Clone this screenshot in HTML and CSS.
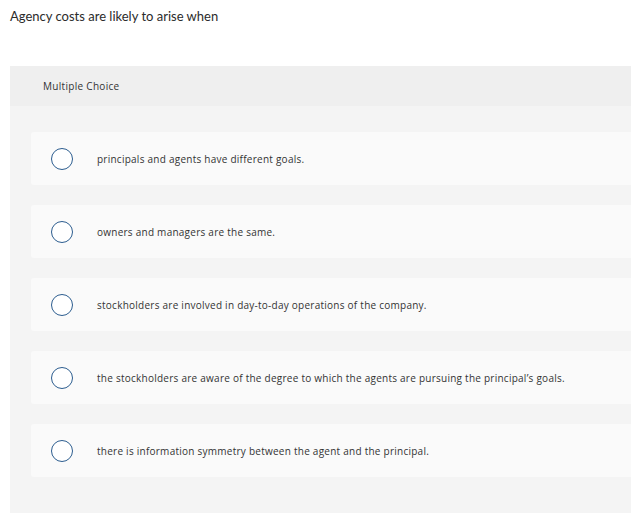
FILE: index.html
```html
<!DOCTYPE html>
<html>
<head>
<meta charset="utf-8">
<link rel="stylesheet" href="styles.css">
</head>
<body>
<div class="question">Agency costs are likely to arise when</div>
<div class="panel">
  <div class="panel-header">Multiple Choice</div>
  <div class="panel-body">
    <div class="option"><span class="radio"></span><span class="label">principals and agents have different goals.</span></div>
    <div class="option"><span class="radio"></span><span class="label">owners and managers are the same.</span></div>
    <div class="option"><span class="radio"></span><span class="label">stockholders are involved in day-to-day operations of the company.</span></div>
    <div class="option"><span class="radio"></span><span class="label">the stockholders are aware of the degree to which the agents are pursuing the principal’s goals.</span></div>
    <div class="option"><span class="radio"></span><span class="label">there is information symmetry between the agent and the principal.</span></div>
  </div>
</div>
</body>
</html>
```
FILE: styles.css
```css
html, body {
  margin: 0;
  padding: 0;
  background: #ffffff;
}
body {
  font-family: Lato, "Open Sans", sans-serif;
  color: #333333;
  width: 631px;
  height: 513px;
  overflow: hidden;
}
.question {
  font-size: 13px;
  line-height: 16px;
  padding: 8px 0 0 10px;
  height: 66px;
  box-sizing: border-box;
  color: #2b2b2b;
}
.panel {
  margin-left: 10px;
  background: #f4f4f4;
  height: 447px;
}
.panel-header {
  background: #efefef;
  height: 40px;
  padding-left: 33px;
  display: flex;
  align-items: center;
  font-family: "Open Sans", Lato, sans-serif;
  font-size: 10px;
  letter-spacing: 0.3px;
  color: #333333;
}
.panel-body {
  padding: 26px 0 0 21px;
  display: flex;
  flex-direction: column;
  gap: 20px;
}
.option {
  background: #fafafa;
  height: 53px;
  display: flex;
  align-items: center;
  padding-left: 20px;
  border-radius: 3px 0 0 3px;
}
.radio {
  width: 20px;
  height: 20px;
  border: 1.5px solid #2c5d8f;
  border-radius: 50%;
  background: #ffffff;
  flex: none;
}
.label {
  margin-left: 24px;
  font-family: "Open Sans", Lato, sans-serif;
  font-size: 10px;
  letter-spacing: 0.25px;
  color: #333333;
}
```
